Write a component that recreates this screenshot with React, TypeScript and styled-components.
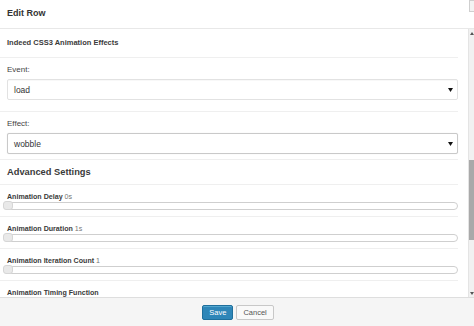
import React from "react";
import styled, { createGlobalStyle } from "styled-components";

const Global = createGlobalStyle`
  html, body { margin: 0; padding: 0; background: #fff; }
  body { font-family: "Liberation Sans", Arial, sans-serif; color: #333; }
  * { box-sizing: border-box; }
`;

const Frame = styled.div`
  width: 474px;
  height: 326px;
  display: flex;
  flex-direction: column;
  overflow: hidden;
  background: #fff;
`;

const Header = styled.div`
  height: 29px;
  flex: none;
  display: flex;
  align-items: center;
  padding-left: 7px;
  border-bottom: 1px solid #e8e8e8;
  position: relative;
`;

const Title = styled.div`
  font-size: 9px;
  font-weight: bold;
  color: #333;
  flex: 1;
  margin-top: -2px;
`;

const Corner = styled.div`
  align-self: flex-start;
  width: 5px;
  height: 12px;
  background: #f3f3f3;
  border: 1px solid #cfcfcf;
  border-right: none;
`;

const Body = styled.div`
  height: 268px;
  flex: none;
  display: flex;
  overflow: hidden;
`;

const Content = styled.div`
  flex: 1;
  overflow: hidden;
  display: flex;
  flex-direction: column;
  padding-right: 10px;
`;

const Section = styled.div<{ $h?: number; $pt?: number; $pb?: number }>`
  flex: none;
  display: flex;
  flex-direction: column;
  padding: ${(p) => p.$pt ?? 0}px 0 ${(p) => p.$pb ?? 0}px 7px;
  ${(p) => (p.$h ? `height: ${p.$h}px; justify-content: center;` : "")}
  border-bottom: 1px solid #efefef;
`;

const Heading = styled.div<{ $size: number }>`
  font-size: ${(p) => p.$size}px;
  font-weight: bold;
  color: #3a3a3a;
  line-height: 10px;
`;

const Label = styled.div`
  font-size: 8px;
  line-height: 10px;
  color: #444;
  height: 10px;
`;

const Select = styled.div<{ $focus?: boolean }>`
  margin-top: 4px;
  height: 21px;
  border: 1px solid ${(p) => (p.$focus ? "#c9c9c9" : "#e2e2e2")};
  border-radius: 2px;
  box-shadow: ${(p) =>
    p.$focus ? "0 0 1px rgba(0,0,0,0.15)" : "inset 0 1px 1px rgba(0,0,0,0.03)"};
  display: flex;
  align-items: center;
  padding: 0 4px 0 6px;
  font-size: 8.5px;
  color: #333;
  background: #fff;
`;

const SelectText = styled.span`
  flex: 1;
`;

const SliderLabel = styled.div`
  font-size: 7.1px;
  font-weight: bold;
  line-height: 8px;
  height: 8px;
  color: #3a3a3a;
`;

const Value = styled.span`
  font-weight: normal;
  color: #777;
`;

const Track = styled.div`
  position: relative;
  margin-top: 1px;
  height: 8px;
  border: 1px solid #cfcfcf;
  border-radius: 4px;
  background: #fff;
`;

const Handle = styled.div`
  position: absolute;
  left: -5px;
  top: -2px;
  width: 10px;
  height: 9px;
  border-radius: 3px;
  background: #e9e9e9;
  border: 1px solid #d6d6d6;
`;

const ScrollBar = styled.div`
  width: 6px;
  flex: none;
  display: flex;
  flex-direction: column;
  background: #f1f1f1;
  border-left: 1px solid #e4e4e4;
`;

const ScrollArrow = styled.div`
  height: 8px;
  flex: none;
  display: flex;
  align-items: center;
  justify-content: center;
`;

const ScrollTrack = styled.div<{ $top: number }>`
  flex: 1;
  padding-top: ${(p) => p.$top}px;
`;

const Thumb = styled.div<{ $h: number }>`
  height: ${(p) => p.$h}px;
  background: #a9a9a9;
`;

const Footer = styled.div`
  flex: 1;
  display: flex;
  align-items: center;
  justify-content: center;
  gap: 3px;
  background: #f5f5f5;
  border-top: 1px solid #dedede;
  padding-left: 2px;
`;

const Button = styled.button<{ $primary?: boolean }>`
  height: 15px;
  padding: 0 ${(p) => (p.$primary ? 6 : 6)}px;
  font-family: "Liberation Sans", Arial, sans-serif;
  font-size: 7.5px;
  border-radius: 2px;
  border: 1px solid ${(p) => (p.$primary ? "#1f6f9c" : "#c8c8c8")};
  background: ${(p) => (p.$primary ? "#2e86b8" : "#f9f9f9")};
  color: ${(p) => (p.$primary ? "#fff" : "#555")};
  box-shadow: ${(p) => (p.$primary ? "inset 0 1px 0 rgba(120,200,230,0.5)" : "none")};
  line-height: 13px;
  cursor: pointer;
`;

const Caret = () => (
  <svg width="5" height="4" viewBox="0 0 5 4">
    <path d="M0 0H5L2.5 4Z" fill="#111" />
  </svg>
);

const Slider = ({ label, value }: { label: string; value: string }) => (
  <Section $pt={8} $pb={6}>
    <SliderLabel>
      {label} <Value>{value}</Value>
    </SliderLabel>
    <Track>
      <Handle />
    </Track>
  </Section>
);

export default function App() {
  return (
    <>
      <Global />
      <Frame>
        <Header>
          <Title>Edit Row</Title>
          <Corner />
        </Header>
        <Body>
          <Content>
            <Section $h={29}>
              <Heading $size={7.5}>Indeed CSS3 Animation Effects</Heading>
            </Section>
            <Section $pt={7} $pb={11}>
              <Label>Event:</Label>
              <Select>
                <SelectText>load</SelectText>
                <Caret />
              </Select>
            </Section>
            <Section $pt={7} $pb={5}>
              <Label>Effect:</Label>
              <Select $focus>
                <SelectText>wobble</SelectText>
                <Caret />
              </Select>
            </Section>
            <Section $h={25}>
              <Heading $size={9.3}>Advanced Settings</Heading>
            </Section>
            <Slider label="Animation Delay" value="0s" />
            <Slider label="Animation Duration" value="1s" />
            <Slider label="Animation Iteration Count" value="1" />
            <Section $pt={8}>
              <SliderLabel>Animation Timing Function</SliderLabel>
            </Section>
          </Content>
          <ScrollBar>
            <ScrollArrow>
              <svg width="4" height="3" viewBox="0 0 4 3">
                <path d="M0 3H4L2 0Z" fill="#555" />
              </svg>
            </ScrollArrow>
            <ScrollTrack $top={123}>
              <Thumb $h={80} />
            </ScrollTrack>
            <ScrollArrow>
              <svg width="4" height="3" viewBox="0 0 4 3">
                <path d="M0 0H4L2 3Z" fill="#555" />
              </svg>
            </ScrollArrow>
          </ScrollBar>
        </Body>
        <Footer>
          <Button $primary>Save</Button>
          <Button>Cancel</Button>
        </Footer>
      </Frame>
    </>
  );
}
